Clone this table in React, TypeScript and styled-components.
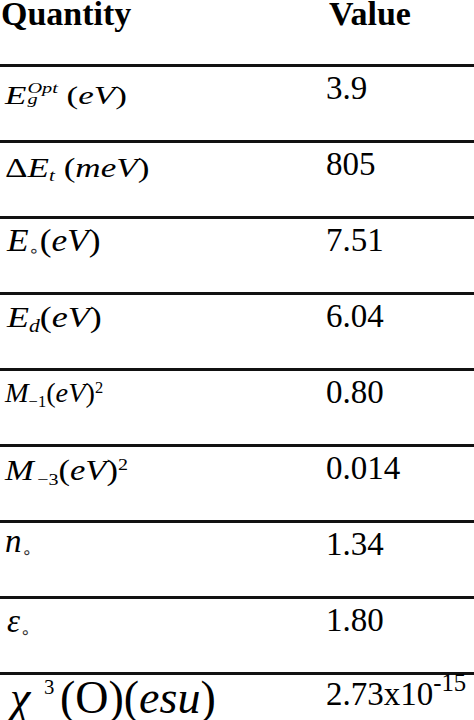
import React from "react";
import styled, { createGlobalStyle } from "styled-components";

const SERIF = `"Liberation Serif", Tinos, "DejaVu Serif", serif`;

const GlobalStyle = createGlobalStyle`
  html, body { margin: 0; padding: 0; background: #fff; }
  body { font-family: ${SERIF}; color: #000; }
`;

const Table = styled.div`
  width: 474px;
  height: 720px;
  overflow: hidden;
  background: #fff;
  font-family: ${SERIF};
`;

const HeaderRow = styled.div`
  display: grid;
  grid-template-columns: 326px 1fr;
  height: 64px;
`;

const HeadCell = styled.div<{ $pl: number }>`
  font-weight: 700;
  font-size: 34px;
  line-height: 27px;
  padding-left: ${(p) => p.$pl}px;
  white-space: nowrap;
`;

const Row = styled.div`
  display: grid;
  grid-template-columns: 326px 1fr;
  height: 76px;
  box-sizing: border-box;
  border-top: 3px solid #111;
`;

const LabelCell = styled.div<{ $top: number; $left: number }>`
  font-size: 0;
  padding-top: ${(p) => p.$top}px;
  padding-left: ${(p) => p.$left}px;
  white-space: nowrap;
`;

const Label = styled.span<{ $size: number; $sx: number }>`
  display: inline-block;
  font-size: ${(p) => p.$size}px;
  line-height: 1;
  transform: scaleX(${(p) => p.$sx});
  transform-origin: left center;
  white-space: nowrap;
`;

const ValueCell = styled.div<{ $top: number }>`
  font-size: 33px;
  line-height: 38px;
  padding-top: ${(p) => p.$top}px;
  white-space: nowrap;
`;

const V = styled.span`
  font-style: italic;
`;

const Sub = styled.span<{ $size: number; $shift: number; $italic?: boolean }>`
  font-size: ${(p) => p.$size}em;
  line-height: 0;
  vertical-align: ${(p) => -p.$shift}em;
  font-style: ${(p) => (p.$italic ? "italic" : "normal")};
`;

const Sup = styled.span<{ $size: number; $shift: number; $italic?: boolean }>`
  font-size: ${(p) => p.$size}em;
  line-height: 0;
  vertical-align: ${(p) => p.$shift}em;
  font-style: ${(p) => (p.$italic ? "italic" : "normal")};
`;

const Stack = styled.span`
  display: inline-flex;
  flex-direction: column;
  font-size: 0.58em;
  line-height: 0.75;
  font-style: italic;
  vertical-align: 0.75em;
  margin-left: 0.05em;
`;

const Gap = styled.span<{ $w: number }>`
  display: inline-block;
  width: ${(p) => p.$w}em;
`;

const Ring = styled.span`
  font-family: "DejaVu Sans", sans-serif;
  font-size: 0.5em;
  line-height: 0;
  vertical-align: -0.35em;
  color: #333;
`;

type RowSpec = {
  label: React.ReactNode;
  size: number;
  sx: number;
  base: number;
  left: number;
  value: React.ReactNode;
  vbase?: number;
};

const eV = (
  <>
    (<V>eV</V>)
  </>
);

const rows: RowSpec[] = [
  {
    size: 25,
    sx: 1.4,
    base: 37,
    left: 5,
    label: (
      <>
        <V>E</V>
        <Stack>
          <span>Opt</span>
          <span>g</span>
        </Stack>
        <Gap $w={0.25} />
        {eV}
      </>
    ),
    value: "3.9",
  },
  {
    size: 27,
    sx: 1.3,
    base: 35,
    left: 5,
    label: (
      <>
        Δ<V>E</V>
        <Sub $size={0.6} $shift={0.25} $italic>
          t
        </Sub>{" "}
        (<V>meV</V>)
      </>
    ),
    value: "805",
  },
  {
    size: 31,
    sx: 1.14,
    base: 32,
    left: 7,
    label: (
      <>
        <V>E</V>
        <Ring>∘</Ring>
        {eV}
      </>
    ),
    value: "7.51",
  },
  {
    size: 30,
    sx: 1.2,
    base: 32,
    left: 7,
    label: (
      <>
        <V>E</V>
        <Sub $size={0.6} $shift={0.25} $italic>
          d
        </Sub>
        {eV}
      </>
    ),
    value: "6.04",
  },
  {
    size: 27,
    sx: 1.05,
    base: 32,
    left: 5,
    label: (
      <>
        <V>M</V>
        <Sub $size={0.58} $shift={0.3}>
          −1
        </Sub>
        {eV}
        <Sup $size={0.58} $shift={0.6}>
          2
        </Sup>
      </>
    ),
    value: "0.80",
  },
  {
    size: 30,
    sx: 1.15,
    base: 33,
    left: 5,
    label: (
      <>
        <V>M</V>
        <Gap $w={0.1} />
        <Sub $size={0.58} $shift={0.3}>
          −3
        </Sub>
        {eV}
        <Sup $size={0.58} $shift={0.6}>
          2
        </Sup>
      </>
    ),
    value: "0.014",
  },
  {
    size: 33,
    sx: 1,
    base: 30,
    left: 5,
    label: (
      <>
        <V>n</V>
        <Ring>∘</Ring>
      </>
    ),
    value: "1.34",
  },
  {
    size: 33,
    sx: 1,
    base: 34,
    left: 7,
    label: (
      <>
        <V>ε</V>
        <Ring>∘</Ring>
      </>
    ),
    value: "1.80",
  },
  {
    size: 46,
    sx: 1,
    base: 38,
    left: 10,
    label: (
      <>
        <V>χ</V>
        <Gap $w={0.3} />
        <Sup $size={0.45} $shift={0.9}>
          3
        </Sup>
        <Gap $w={0.12} />
        (O)(<V>esu</V>)
      </>
    ),
    value: (
      <>
        2.73x10
        <Sup $size={0.75} $shift={0.55}>
          -15
        </Sup>
      </>
    ),
    vbase: 28,
  },
];

const VALUE_ASCENT = 30.1;

export default function App() {
  return (
    <>
      <GlobalStyle />
      <Table>
        <HeaderRow>
          <HeadCell $pl={1}>Quantity</HeadCell>
          <HeadCell $pl={3}>Value</HeadCell>
        </HeaderRow>
        {rows.map((r, i) => (
          <Row key={i}>
            <LabelCell $top={r.base - 0.8375 * r.size} $left={r.left}>
              <Label $size={r.size} $sx={r.sx}>
                {r.label}
              </Label>
            </LabelCell>
            <ValueCell $top={(r.vbase ?? 32) - VALUE_ASCENT}>{r.value}</ValueCell>
          </Row>
        ))}
      </Table>
    </>
  );
}
